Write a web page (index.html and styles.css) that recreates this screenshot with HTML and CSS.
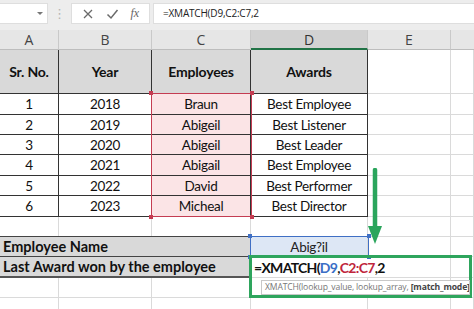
FILE: index.html
```html
<!DOCTYPE html>
<html>
<head>
<meta charset="utf-8">
<link rel="stylesheet" href="styles.css">
</head>
<body>
<div class="app">
  <div class="fbar">
    <div class="namebox"><span class="caret"></span></div>
    <div class="grip">⋮</div>
    <div class="fbtns">
      <svg class="ico" width="12" height="12" viewBox="0 0 12 12"><path d="M2 2 L10 10 M10 2 L2 10" stroke="#6a6a6a" stroke-width="1.3" fill="none"/></svg>
      <svg class="ico" width="13" height="12" viewBox="0 0 13 12"><path d="M1.5 6.5 L5 10 L11.5 2" stroke="#6a6a6a" stroke-width="1.5" fill="none"/></svg>
      <span class="fx">fx</span>
    </div>
    <div class="finput">=XMATCH(D9,C2:C7,2</div>
  </div>

  <div class="sheet">
    <div class="ch">A</div>
    <div class="ch">B</div>
    <div class="ch">C</div>
    <div class="ch ch-sel">D</div>
    <div class="ch">E</div>
    <div class="ch ch-last"></div>

    <div class="c th">Sr. No.</div>
    <div class="c th">Year</div>
    <div class="c th">Employees</div>
    <div class="c th">Awards</div>
    <div class="c g"></div>
    <div class="c g"></div>

    <div class="c t">1</div><div class="c t">2018</div><div class="c t pink">Braun</div><div class="c t">Best Employee</div><div class="c g"></div><div class="c g"></div>
    <div class="c t">2</div><div class="c t">2019</div><div class="c t pink">Abigeil</div><div class="c t">Best Listener</div><div class="c g"></div><div class="c g"></div>
    <div class="c t">3</div><div class="c t">2020</div><div class="c t pink">Abigeil</div><div class="c t">Best Leader</div><div class="c g"></div><div class="c g"></div>
    <div class="c t">4</div><div class="c t">2021</div><div class="c t pink">Abigail</div><div class="c t">Best Employee</div><div class="c g"></div><div class="c g"></div>
    <div class="c t">5</div><div class="c t">2022</div><div class="c t pink">David</div><div class="c t">Best Performer</div><div class="c g"></div><div class="c g"></div>
    <div class="c t">6</div><div class="c t">2023</div><div class="c t pink">Micheal</div><div class="c t">Best Director</div><div class="c g"></div><div class="c g"></div>

    <div class="c g"></div><div class="c g"></div><div class="c g"></div><div class="c g"></div><div class="c g"></div><div class="c g"></div>

    <div class="c lbl lbl-top">Employee Name</div>
    <div class="c blue">Abig?il</div>
    <div class="c g"></div><div class="c g"></div>

    <div class="c lbl lbl-bot">Last Award won by the employee</div>
    <div class="c edit"><span class="k">=XMATCH(</span><span class="rb">D9</span><span class="k">,</span><span class="rr">C2:C7</span><span class="k">,2</span><span class="cursor"></span></div>
    <div class="c g"></div><div class="c g"></div>

    <div class="c g"></div><div class="c g"></div><div class="c g"></div><div class="c g"></div><div class="c g"></div><div class="c g"></div>
    <div class="c g"></div><div class="c g"></div><div class="c g"></div><div class="c g"></div><div class="c g"></div><div class="c g"></div>
  </div>

  <div class="rng-red"><i class="sq tl"></i><i class="sq tr"></i><i class="sq bl"></i><i class="sq br"></i></div>
  <div class="rng-blue"><i class="sq tl"></i><i class="sq tr"></i><i class="sq bl"></i><i class="sq br"></i></div>

  <svg class="arrow" width="16" height="78" viewBox="0 0 16 78">
    <path d="M8 2 L8 62" stroke="#2aa55c" stroke-width="4.5" stroke-linecap="round" fill="none"/>
    <path d="M1 58 L15 58 L8 76 Z" fill="#2aa55c"/>
  </svg>

  <div class="gbox"></div>
  <div class="tip">XMATCH(lookup_value, lookup_array, <b>[match_mode]</b></div>
</div>
</body>
</html>
```

FILE: styles.css
```css
* { box-sizing: border-box; }
html, body { margin: 0; padding: 0; }
body { width: 474px; height: 309px; overflow: hidden; background: #fff; }
.app { position: relative; width: 474px; height: 309px; overflow: hidden; font-family: "Lato", "Liberation Sans", sans-serif; }

.fbar {
  height: 30px;
  background: #ededed;
  display: flex;
  align-items: flex-start;
  padding-top: 3px;
}
.namebox {
  width: 48px; height: 21px;
  background: #fff;
  border: 1px solid #dedede;
  border-left: none;
  position: relative;
  display: flex; align-items: center; justify-content: flex-end;
  padding-right: 4px;
}
.caret {
  width: 0; height: 0;
  border-left: 3px solid transparent;
  border-right: 3px solid transparent;
  border-top: 3px solid #777;
}
.grip { width: 23px; text-align: center; color: #b5b5b5; font-size: 13px; line-height: 21px; font-family: "DejaVu Sans", sans-serif; }
.fbtns {
  width: 79px; height: 21px;
  background: #fff;
  border: 1px solid #dedede;
  display: flex; align-items: center; justify-content: space-around;
  padding: 0 4px;
}
.ico { display: block; }
.fx { font-family: "Liberation Serif", serif; font-style: italic; font-size: 12px; color: #666; }
.finput {
  flex: 1; height: 21px; margin-left: 3px;
  background: #fff;
  border: 1px solid #dedede; border-right: none;
  font-family: "Open Sans", sans-serif; font-size: 10px; letter-spacing: -0.2px; color: #222;
  line-height: 19px; padding-left: 9px;
}

.sheet {
  display: grid;
  grid-template-columns: 59px 93px 99px 117px 83px 23px;
  grid-template-rows: 20px 44px 21px 20px 20px 21px 20px 21px 20px 20px 21px 20px 20px;
}
.ch {
  background: #e6e6e6;
  border-right: 1px solid #c9c9c9;
  border-bottom: 1px solid #bdbdbd;
  font-family: "Open Sans", sans-serif; font-size: 14px; color: #444;
  display: flex; align-items: center; justify-content: center;
}
.ch-sel { background: #d2d2d2; border-bottom: 2px solid #217346; color: #333; }
.ch-last { border-right: none; }

.c {
  display: flex; align-items: center; justify-content: center;
  font-size: 13.5px; letter-spacing: -0.3px; color: #111;
  border-right: 1px solid #dadada;
  border-bottom: 1px solid #dadada;
  white-space: nowrap;
}
.th {
  background: #d9d9d9;
  font-weight: 700; font-size: 14px; letter-spacing: -0.2px;
  border-right: 1px solid #333;
  border-bottom: 1px solid #333;
}
.t { border-right: 1px solid #333; border-bottom: 1px solid #333; }
.pink { background: #fbe4e6; }
.lbl {
  grid-column: 1 / 4;
  background: #d9d9d9;
  justify-content: flex-start;
  padding-left: 3px;
  font-weight: 700; font-size: 14.5px; letter-spacing: 0;
  border-right: 1px solid #555;
}
.lbl-top { border-top: 1px solid #444; margin-top: -1px; border-bottom: 1px solid #444; }
.lbl-bot { border-bottom: 2px solid #555; }
.blue { background: #dde7f5; color: #222; }
.edit {
  justify-content: flex-start;
  padding-left: 3px;
  font-weight: 700; font-size: 14px; letter-spacing: -0.7px;
  overflow: visible;
  border-right: none;
}
.k { color: #111; }
.rb { color: #3a6ec6; }
.rr { color: #c0263c; }
.cursor { display: inline-block; width: 1px; height: 15px; background: #111; margin-left: 2px; }

.rng-red {
  position: absolute; left: 151px; top: 93px; width: 101px; height: 124px;
  border: 1px solid #c43c52;
}
.rng-blue {
  position: absolute; left: 250px; top: 236px; width: 119px; height: 21px;
  border: 1px solid #3f6fc4;
}
.sq { position: absolute; width: 4px; height: 4px; }
.rng-red .sq { background: #c43c52; }
.rng-blue .sq { background: #3f6fc4; }
.sq.tl { left: -3px; top: -3px; }
.sq.tr { right: -3px; top: -3px; }
.sq.bl { left: -3px; bottom: -3px; }
.sq.br { right: -3px; bottom: -3px; }

.arrow { position: absolute; left: 367px; top: 168px; }

.gbox {
  position: absolute; left: 249px; top: 255px; width: 223px; height: 43px;
  border: 3px solid #2ea55d;
}
.tip {
  position: absolute; left: 261px; top: 280px; width: 209px; height: 15px;
  background: #fff;
  border: 1px solid #c8c8c8;
  font-family: "Open Sans", sans-serif; font-size: 8.6px; letter-spacing: -0.15px; color: #777;
  line-height: 13px; padding-left: 3px; white-space: nowrap; overflow: hidden;
}
.tip b { color: #444; }
```
